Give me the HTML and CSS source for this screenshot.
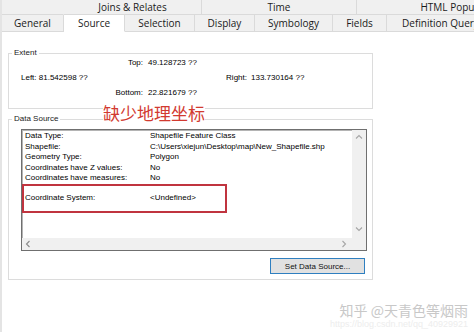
FILE: index.html
```html
<!DOCTYPE html>
<html lang="en">

<head>
    <meta charset="UTF-8">
    <title>Layer Properties</title>
    <link rel="stylesheet" href="styles.css">
</head>

<body>
    <div class="window">
        <div class="tabs">
            <div class="tab-row top">
                <div class="tab t-blank"></div>
                <div class="tab t-joins">Joins &amp; Relates</div>
                <div class="tab t-time">Time</div>
                <div class="tab t-html">HTML Popup</div>
            </div>
            <div class="tab-row bottom">
                <div class="tab t-general">General</div>
                <div class="tab active t-source">Source</div>
                <div class="tab t-selection">Selection</div>
                <div class="tab t-display">Display</div>
                <div class="tab t-symbology">Symbology</div>
                <div class="tab t-fields">Fields</div>
                <div class="tab t-query">Definition Query</div>
            </div>
        </div>

        <div class="page">
            <fieldset class="group extent">
                <legend>Extent</legend>
                <div class="extent-grid">
                    <span class="ext-label r1">Top:</span>
                    <span class="ext-val r1">49.128723 ??</span>
                    <span class="ext-left r2">Left: 81.542598 ??</span>
                    <span class="ext-label right r2">Right:</span>
                    <span class="ext-val right r2">133.730164 ??</span>
                    <span class="ext-label r3">Bottom:</span>
                    <span class="ext-val r3">22.821679 ??</span>
                </div>
            </fieldset>

            <fieldset class="group source">
                <legend>Data Source</legend>
                <div class="list">
                    <div class="list-body">
                        <div class="row"><span>Data Type:</span><span>Shapefile Feature Class</span></div>
                        <div class="row"><span>Shapefile:</span><span>C:\Users\xiejun\Desktop\map\New_Shapefile.shp</span></div>
                        <div class="row"><span>Geometry Type:</span><span>Polygon</span></div>
                        <div class="row"><span>Coordinates have Z values:</span><span>No</span></div>
                        <div class="row"><span>Coordinates have measures:</span><span>No</span></div>
                        <div class="row marked"><span>Coordinate System:</span><span>&lt;Undefined&gt;</span></div>
                    </div>
                    <div class="vscroll">
                        <svg width="14" height="14" viewBox="0 0 14 14"><path d="M4 8.5 L7 5.5 L10 8.5" /></svg>
                        <svg width="14" height="14" viewBox="0 0 14 14"><path d="M4 5.5 L7 8.5 L10 5.5" /></svg>
                    </div>
                    <div class="hscroll">
                        <svg class="dark" width="12" height="12" viewBox="0 0 12 12"><path d="M7.5 3 L4.5 6 L7.5 9" /></svg>
                        <svg width="12" height="12" viewBox="0 0 12 12"><path d="M4.5 3 L7.5 6 L4.5 9" /></svg>
                    </div>
                    <div class="corner"></div>
                </div>
                <div class="actions">
                    <button class="btn">Set Data Source...</button>
                </div>
            </fieldset>

            <div class="note">缺少地理坐标</div>
        </div>

        <div class="watermark">
            <div class="wm-name">知乎 @天青色等烟雨</div>
            <div class="wm-url">https://blog.csdn.net/qq_40929921</div>
        </div>
    </div>
</body>

</html>
```

FILE: styles.css
```css
* {
    margin: 0;
    padding: 0;
    box-sizing: border-box;
}

body {
    background: #fff;
}

.window {
    position: relative;
    width: 474px;
    height: 332px;
    overflow: hidden;
    border-left: 2px solid #e4e4e4;
    background: #fff;
    font-family: "Liberation Sans", Arial, sans-serif;
    font-size: 8px;
    color: #000;
}

/* tabs */
.tab-row {
    display: flex;
    white-space: nowrap;
}

.tab-row.top {
    height: 15px;
}

.tab-row.bottom {
    height: 17px;
}

.tab {
    flex: none;
    display: flex;
    align-items: center;
    justify-content: center;
    background: #f0f0f0;
    border-right: 1px solid #dadada;
    border-bottom: 1px solid #dadada;
    font-family: "Open Sans", "Noto Sans", sans-serif;
    font-size: 10px;
    color: #1a1a1a;
}

.tab.active {
    background: #fff;
    border-bottom-color: #fff;
}

.t-blank { width: 62px; border-right-color: #f0f0f0; }
.t-joins { width: 138px; }
.t-time { width: 155px; }
.t-html { width: 188px; }

.t-general { width: 62px; }
.t-source { width: 61px; }
.t-selection { width: 70px; }
.t-display { width: 60px; }
.t-symbology { width: 78px; }
.t-fields { width: 54px; }
.t-query { width: 108px; }

/* page */
.page {
    position: relative;
    padding: 16px 0 0 6px;
}

.group {
    width: 365px;
    min-width: 0;
    border: 1px solid #dcdcdc;
}

.group legend {
    margin-left: 3px;
    padding: 0 2px;
    line-height: 10px;
    color: #222;
}

.extent-grid {
    display: grid;
    grid-template-columns: 92px 42px 76px 28px 1fr;
    grid-template-rows: 10px 10px 10px;
    row-gap: 5px;
    padding-bottom: 10px;
    line-height: 10px;
    white-space: nowrap;
}

.ext-label {
    grid-column: 2;
    text-align: right;
}

.ext-val {
    grid-column: 3;
    padding-left: 5px;
}

.ext-label.right {
    grid-column: 4;
}

.ext-val.right {
    grid-column: 5;
    padding-left: 4px;
}

.ext-left {
    grid-column: 1 / 4;
    padding-left: 12px;
}

.r1 { grid-row: 1; }
.r2 { grid-row: 2; }
.r3 { grid-row: 3; }

.source {
    margin-top: 5px;
    padding-bottom: 5px;
}

/* list box */
.list {
    display: grid;
    grid-template-columns: 1fr 14px;
    grid-template-rows: 1fr 12px;
    width: 346px;
    height: 122px;
    margin: 5px 0 0 12px;
    border: 1px solid #6f6f6f;
    box-shadow: inset 1px 1px 0 #b4b4b4;
}

.list-body {
    padding: 1px 0 0 3px;
    overflow: hidden;
    white-space: nowrap;
}

.row {
    display: grid;
    grid-template-columns: 125px auto;
    height: 10.6px;
    line-height: 10.6px;
}

.row.marked {
    width: 205px;
    height: 29px;
    margin-left: -3px;
    padding-left: 1px;
    border: 2px solid #c0343f;
    align-items: center;
}

.vscroll {
    display: flex;
    flex-direction: column;
    justify-content: space-between;
    padding: 0 0 2px;
    background: #f0f0f0;
}

.hscroll {
    display: flex;
    justify-content: space-between;
    align-items: center;
    padding: 0 2px 0 0;
    background: #f0f0f0;
}

.corner {
    background: #f0f0f0;
}

.vscroll path,
.hscroll path {
    fill: none;
    stroke: #a6a6a6;
    stroke-width: 1.1;
}

.hscroll .dark path {
    stroke: #8a8a8a;
}

.actions {
    display: flex;
    justify-content: flex-end;
    margin-top: 7px;
    padding-right: 7px;
}

.btn {
    width: 95px;
    height: 16px;
    border: 1px solid #2f7fc0;
    background: #e1e1e1;
    font-family: "Liberation Sans", Arial, sans-serif;
    font-size: 8px;
    color: #111;
}

/* red annotation over the boxes */
.note {
    position: absolute;
    left: 101px;
    top: 72px;
    font-family: "Noto Sans CJK SC", sans-serif;
    font-size: 17px;
    line-height: 18px;
    color: #d23a30;
    background: #fff;
}

.watermark {
    position: absolute;
    left: 310px;
    top: 301px;
    width: 164px;
    text-align: right;
    padding-right: 8px;
}

.wm-name {
    font-family: "Noto Sans CJK SC", sans-serif;
    font-size: 14px;
    line-height: 18px;
    color: #c8c8c8;
}

.wm-url {
    font-size: 9px;
    line-height: 10px;
    color: #ededed;
}
```
